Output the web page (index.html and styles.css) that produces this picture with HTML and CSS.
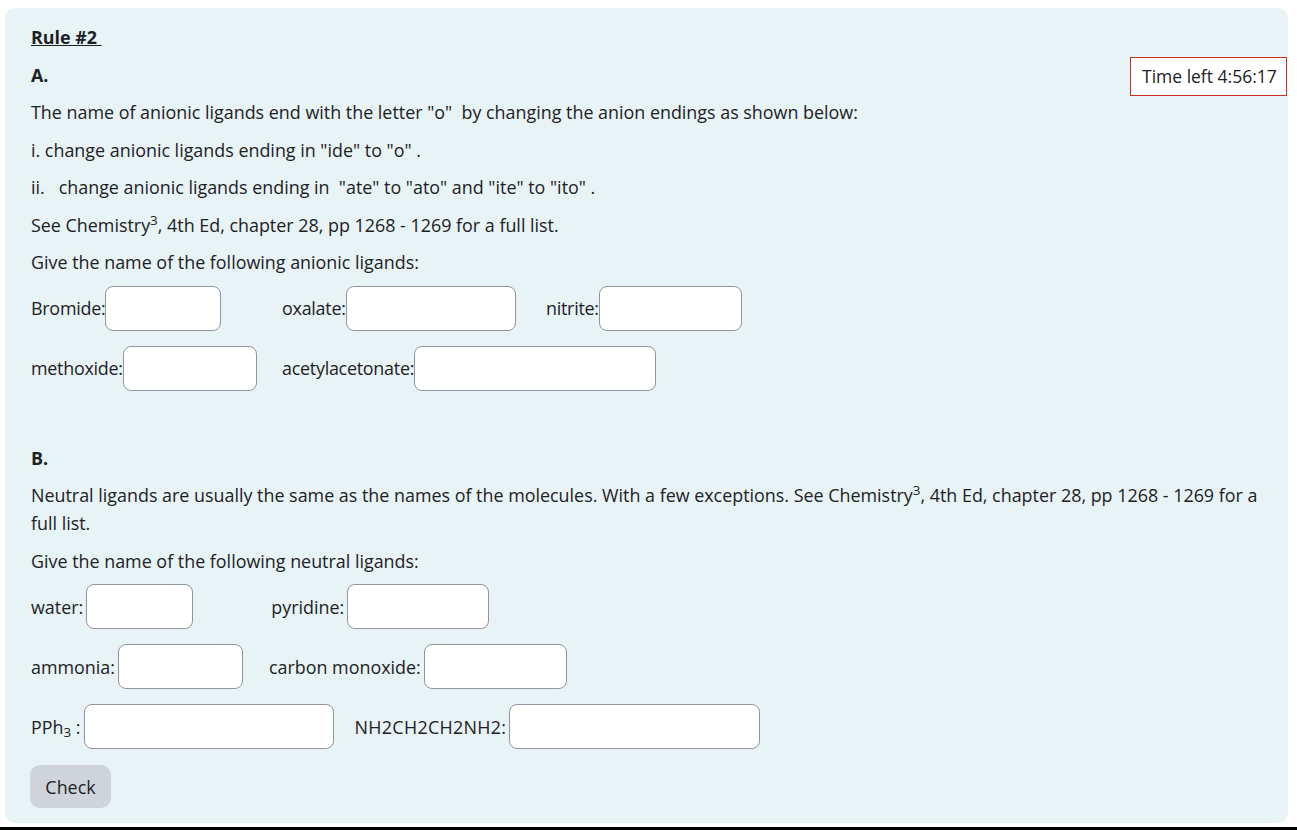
FILE: index.html
```html
<!DOCTYPE html>
<html lang="en">
<head>
<meta charset="utf-8">
<title>Rule #2</title>
<link rel="stylesheet" href="styles.css">
</head>
<body>
<div class="card">
  <div class="timer">Time left 4:56:17</div>
  <p class="bold"><u>Rule #2&nbsp;</u></p>
  <p class="bold">A.</p>
  <p>The name of anionic ligands end with the letter "o"&nbsp; by changing the anion endings as shown below:</p>
  <p>i. change anionic ligands ending in "ide" to "o" .</p>
  <p>ii.&nbsp;&nbsp; change anionic ligands ending in&nbsp; "ate" to "ato" and "ite" to "ito" .</p>
  <p>See Chemistry<sup>3</sup>, 4th Ed, chapter 28, pp 1268 - 1269 for a full list.</p>
  <p>Give the name of the following anionic ligands:</p>
  <div class="grid-a">
    <div class="field"><label>Bromide:</label><input type="text" class="w116"></div>
    <div class="field"><label>oxalate:</label><input type="text" class="w170"></div>
    <div class="field"><label>nitrite:</label><input type="text" class="w143"></div>
    <div class="field"><label>methoxide:</label><input type="text" class="w134"></div>
    <div class="field"><label>acetylacetonate:</label><input type="text" class="w242"></div>
  </div>
  <p class="bold">B.</p>
  <p>Neutral ligands are usually the same as the names of the molecules. With a few exceptions. See Chemistry<sup>3</sup>, 4th Ed, chapter 28, pp 1268 - 1269 for a full list.</p>
  <p>Give the name of the following neutral ligands:</p>
  <div class="row-b">
    <div class="field spaced"><label>water:</label><input type="text" class="w107"></div>
    <div class="field spaced m78"><label>pyridine:</label><input type="text" class="w142"></div>
  </div>
  <div class="row-b">
    <div class="field spaced"><label>ammonia:</label><input type="text" class="w125"></div>
    <div class="field spaced m26"><label>carbon monoxide:</label><input type="text" class="w143"></div>
  </div>
  <div class="row-b">
    <div class="field spaced"><label>PPh<sub>3</sub> :</label><input type="text" class="w250"></div>
    <div class="field spaced m21"><label class="wide">NH2CH2CH2NH2:</label><input type="text" class="w251"></div>
  </div>
  <button type="button" class="check">Check</button>
</div>
<div class="footer"></div>
</body>
</html>
```

FILE: styles.css
```css
html, body {
  margin: 0;
  padding: 0;
  background: #ffffff;
}

body {
  font-family: "Open Sans", "Noto Sans", sans-serif;
  font-size: 17.9px;
  line-height: 28.125px;
  color: #1d2125;
}

.card {
  position: relative;
  box-sizing: border-box;
  width: 1283px;
  margin: 8px 0 0 5px;
  padding: 15px 26px 15px 26px;
  background: #e7f3f5;
  border-radius: 10px;
}

.card p {
  margin: 0 0 9.375px 0;
}

.bold {
  font-weight: 700;
}

sup {
  font-size: 0.75em;
  line-height: 0;
  position: relative;
  top: -0.5em;
  vertical-align: baseline;
}

sub {
  font-size: 0.75em;
  line-height: 0;
  position: relative;
  bottom: -0.25em;
  vertical-align: baseline;
}

.timer {
  position: absolute;
  top: 49px;
  right: 1px;
  box-sizing: border-box;
  width: 157px;
  height: 39px;
  padding-left: 11px;
  display: flex;
  align-items: center;
  background: #ffffff;
  border: 1px solid #ca3120;
  font-size: 17.5px;
}

.grid-a {
  display: grid;
  grid-template-columns: 251px 264px auto;
  row-gap: 15px;
  margin-bottom: 53px;
}

.grid-a label {
  letter-spacing: -0.25px;
}

.field {
  display: flex;
  align-items: center;
}

.field.spaced {
  gap: 3px;
}

.field label.wide {
  letter-spacing: 0.3px;
}

.field input {
  box-sizing: border-box;
  height: 45px;
  margin: 0;
  padding: 0 10px;
  border: 1px solid #8f959e;
  border-radius: 8px;
  background: #ffffff;
  font: inherit;
}

.row-b {
  display: flex;
  align-items: center;
  margin-bottom: 15px;
}

.m78 { margin-left: 78px; }
.m26 { margin-left: 26px; }
.m21 { margin-left: 21px; }

.w107 { width: 107px; }
.w116 { width: 116px; }
.w125 { width: 125px; }
.w134 { width: 134px; }
.w142 { width: 142px; }
.w143 { width: 143px; }
.w170 { width: 170px; }
.w242 { width: 242px; }
.w250 { width: 250px; }
.w251 { width: 251px; }

.check {
  display: block;
  margin: 16px 0 0 -1px;
  width: 81px;
  height: 43px;
  padding: 0;
  border: none;
  border-radius: 10px;
  background: #ced4da;
  color: #1d2125;
  font: inherit;
}

.footer {
  margin-top: 4px;
  height: 10px;
  background: #000000;
}
```
